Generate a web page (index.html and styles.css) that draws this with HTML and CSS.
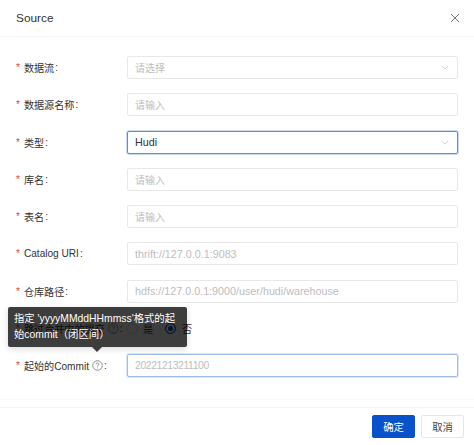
FILE: index.html
```html
<!DOCTYPE html>
<html lang="en">
<head>
  <meta charset="UTF-8" />
  <meta name="viewport" content="width=device-width, initial-scale=1.0"/>
  <title>Source</title>
  <link rel="stylesheet" href="styles.css">
</head>
<body>

<div class="modal">
  <div class="modal-header">
    <span class="modal-title">Source</span>
    <svg class="close-icon" viewBox="0 0 10 10"><path d="M1 1L9 9M9 1L1 9"/></svg>
  </div>

  <form class="modal-body">
    <div class="form-row">
      <label class="form-label"><span class="req">*</span>数据流<span class="colon">:</span></label>
      <div class="field select placeholder cn">请选择
        <svg class="arrow" viewBox="0 0 10 6"><path d="M1 1L5 5L9 1"/></svg>
      </div>
    </div>
    <div class="form-row">
      <label class="form-label"><span class="req">*</span>数据源名称<span class="colon">:</span></label>
      <div class="field placeholder cn">请输入</div>
    </div>
    <div class="form-row">
      <label class="form-label"><span class="req">*</span>类型<span class="colon">:</span></label>
      <div class="field select focused">Hudi
        <svg class="arrow" viewBox="0 0 10 6"><path d="M1 1L5 5L9 1"/></svg>
      </div>
    </div>
    <div class="form-row">
      <label class="form-label"><span class="req">*</span>库名<span class="colon">:</span></label>
      <div class="field placeholder cn">请输入</div>
    </div>
    <div class="form-row">
      <label class="form-label"><span class="req">*</span>表名<span class="colon">:</span></label>
      <div class="field placeholder cn">请输入</div>
    </div>
    <div class="form-row">
      <label class="form-label"><span class="req">*</span>Catalog URI<span class="colon">:</span></label>
      <div class="field placeholder">thrift://127.0.0.1:9083</div>
    </div>
    <div class="form-row">
      <label class="form-label"><span class="req">*</span>仓库路径<span class="colon">:</span></label>
      <div class="field placeholder">hdfs://127.0.0.1:9000/user/hudi/warehouse</div>
    </div>
    <div class="form-row">
      <label class="form-label"><span class="req">*</span>跳过合并中的提交
        <svg class="help-icon" viewBox="0 0 12 12"><circle cx="6" cy="6" r="5.2"/><path d="M4.5 4.7a1.5 1.5 0 1 1 2.3 1.3c-.5.3-.8.6-.8 1.1"/><path d="M6 8.3v.8"/></svg><span class="colon">:</span></label>
      <div class="radio-group">
        <span class="radio"></span><span class="radio-text">是</span>
        <span class="radio checked"></span><span class="radio-text">否</span>
      </div>
    </div>
    <div class="form-row">
      <label class="form-label"><span class="req">*</span>起始的Commit
        <svg class="help-icon" viewBox="0 0 12 12"><circle cx="6" cy="6" r="5.2"/><path d="M4.5 4.7a1.5 1.5 0 1 1 2.3 1.3c-.5.3-.8.6-.8 1.1"/><path d="M6 8.3v.8"/></svg><span class="colon">:</span></label>
      <div class="field placeholder active num">20221213211100</div>
    </div>
  </form>

  <div class="modal-footer">
    <button class="btn btn-primary" type="button">确定</button>
    <button class="btn" type="button">取消</button>
  </div>

  <div class="tooltip">指定 'yyyyMMddHHmmss'格式的起始commit（闭区间）</div>
</div>

</body>
</html>
```

FILE: styles.css
```css
body {
  margin: 0;
  background: #fff;
  font-family: "Liberation Sans", "Noto Sans CJK SC", sans-serif;
  color: #333;
}

.modal {
  position: relative;
  width: 474px;
  height: 445px;
  overflow: hidden;
}

.modal-header {
  display: flex;
  justify-content: space-between;
  align-items: center;
  height: 36px;
  padding: 0 14px 0 16px;
  border-bottom: 1px solid #f3f3f3;
}

.modal-title {
  font-size: 11.84px;
  color: #333;
}

.close-icon {
  width: 10px;
  height: 10px;
  fill: none;
  stroke: #666;
  stroke-width: 0.9;
}

.modal-body {
  height: 363px;
  padding-top: 19px;
  box-sizing: border-box;
  border-bottom: 1px solid #f8f8f8;
}

.form-row {
  display: flex;
  align-items: center;
  height: 23px;
  margin-bottom: 14.3px;
  padding: 0 16px;
}

.form-label {
  display: flex;
  align-items: center;
  width: 111px;
  flex-shrink: 0;
  font-size: 10.1px;
  white-space: nowrap;
}

.req {
  color: #e5484d;
  margin-right: 4px;
}

.colon {
  margin-left: 1px;
}

.field {
  display: flex;
  align-items: center;
  position: relative;
  flex: 1;
  height: 23px;
  box-sizing: border-box;
  padding: 0 7px;
  border: 1px solid #e8e8e8;
  border-radius: 2px;
  font-size: 10.75px;
}

.field.cn {
  font-size: 10px;
}

.field.num {
  font-size: 10.36px;
  letter-spacing: -0.38px;
}

.placeholder {
  color: #bdbdbd;
}

.focused {
  border-color: #5b8fd6;
  box-shadow: 0 0 0 1px #c9daf2;
  color: #333;
}

.active {
  border-color: #9dbde6;
  box-shadow: 0 0 0 1px #dbe7f6;
}

.arrow {
  position: absolute;
  right: 8px;
  top: 8px;
  width: 8px;
  height: 5px;
  fill: none;
  stroke: #c4c4c4;
  stroke-width: 1;
}

.help-icon {
  width: 11px;
  height: 11px;
  margin-left: 3px;
  fill: none;
  stroke: #666;
  stroke-width: 0.8;
}

.radio-group {
  display: flex;
  align-items: center;
  font-size: 10.1px;
}

.radio {
  width: 11px;
  height: 11px;
  box-sizing: border-box;
  border: 1px solid #d9d9d9;
  border-radius: 50%;
  margin-right: 5px;
}

.radio.checked {
  border: 1px solid #0b4fc4;
  background: #0a52cc;
  box-shadow: inset 0 0 0 2px #fff;
  margin-left: 12px;
  margin-right: 6px;
}

.modal-footer {
  display: flex;
  justify-content: flex-end;
  gap: 6px;
  padding: 7px 10px;
  border-top: 1px solid #f3f3f3;
  margin-top: 7px;
}

.btn {
  width: 43px;
  height: 23px;
  padding: 0;
  border: 1px solid #e6e6e6;
  border-radius: 2px;
  background: #fff;
  font-family: inherit;
  font-size: 10.36px;
  color: #444;
}

.btn-primary {
  background: #0a52cc;
  border-color: #0a52cc;
  color: #fff;
}

/* sits over the radio row, the row still shows through */
.tooltip {
  position: absolute;
  left: 8px;
  top: 307px;
  width: 179px;
  height: 40px;
  padding: 4px 6px;
  box-sizing: border-box;
  background: rgba(0, 0, 0, 0.76);
  border-radius: 2px;
  color: #fff;
  font-size: 10.36px;
  line-height: 16px;
  box-shadow: 0 2px 6px rgba(0,0,0,0.15);
}

.tooltip::after {
  content: "";
  position: absolute;
  left: 84px;
  bottom: -5px;
  border-left: 5px solid transparent;
  border-right: 5px solid transparent;
  border-top: 5px solid #3d3d3d;
}
```
